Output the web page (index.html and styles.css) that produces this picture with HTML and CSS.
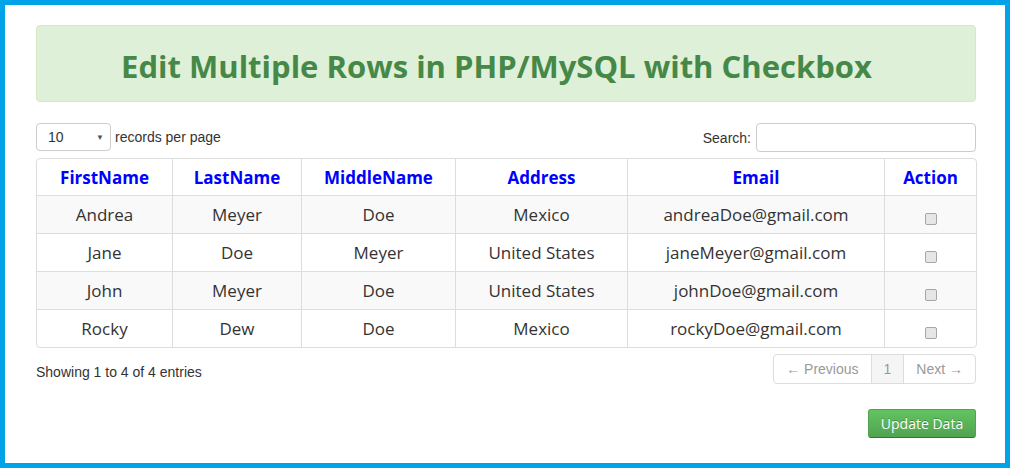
FILE: index.html
```html
<!DOCTYPE html>
<html>
<head>
<meta charset="utf-8">
<link rel="stylesheet" href="styles.css">
</head>
<body>
<div class="frame">
  <div class="container">
    <div class="title-box">
      <h1 class="title">Edit Multiple Rows in PHP/MySQL with Checkbox</h1>
    </div>
    <div class="controls">
      <div class="length">
        <div class="select"><span>10</span><span class="caret">&#9660;</span></div>
        <span class="label">records per page</span>
      </div>
      <div class="search">
        <span class="label">Search:</span>
        <div class="input"></div>
      </div>
    </div>
    <table class="grid">
      <colgroup>
        <col class="c1"><col class="c2"><col class="c3"><col class="c4"><col class="c5"><col class="c6">
      </colgroup>
      <thead>
        <tr><th>FirstName</th><th>LastName</th><th>MiddleName</th><th>Address</th><th>Email</th><th>Action</th></tr>
      </thead>
      <tbody>
        <tr class="odd"><td>Andrea</td><td>Meyer</td><td>Doe</td><td>Mexico</td><td>andreaDoe@gmail.com</td><td><span class="check"></span></td></tr>
        <tr><td>Jane</td><td>Doe</td><td>Meyer</td><td>United States</td><td>janeMeyer@gmail.com</td><td><span class="check"></span></td></tr>
        <tr class="odd"><td>John</td><td>Meyer</td><td>Doe</td><td>United States</td><td>johnDoe@gmail.com</td><td><span class="check"></span></td></tr>
        <tr><td>Rocky</td><td>Dew</td><td>Doe</td><td>Mexico</td><td>rockyDoe@gmail.com</td><td><span class="check"></span></td></tr>
      </tbody>
    </table>
    <div class="footer">
      <div class="info">Showing 1 to 4 of 4 entries</div>
      <ul class="pager">
        <li class="prev">&larr; Previous</li>
        <li class="active">1</li>
        <li class="next">Next &rarr;</li>
      </ul>
    </div>
    <div class="actions">
      <button class="btn-update">Update Data</button>
    </div>
  </div>
</div>
</body>
</html>
```

FILE: styles.css
```css
html, body {
  margin: 0;
  padding: 0;
  background: #fff;
}
.frame {
  box-sizing: border-box;
  height: 468px;
  border: 5px solid #00a3e8;
  background: #fff;
  font-family: "Liberation Sans", Arial, sans-serif;
  font-size: 14px;
  color: #333;
}
.container {
  width: 940px;
  margin-left: 31px;
  padding-top: 20px;
}
.title-box {
  box-sizing: border-box;
  height: 77px;
  background: #dff0d8;
  border: 1px solid #d6e9c6;
  border-radius: 4px;
  display: flex;
  align-items: center;
  justify-content: center;
  padding-right: 19px;
}
.title {
  margin: 0;
  font-family: "Comic Sans MS", "Open Sans", sans-serif;
  font-weight: 700;
  font-size: 31px;
  color: #468847;
  line-height: 1;
  padding-top: 5px;
}
.controls {
  display: flex;
  justify-content: space-between;
  align-items: flex-start;
  margin-top: 21px;
  height: 29px;
}
.length, .search {
  display: flex;
  align-items: center;
}
.select {
  box-sizing: border-box;
  width: 75px;
  height: 28px;
  border: 1px solid #ccc;
  border-radius: 4px;
  display: flex;
  align-items: center;
  justify-content: space-between;
  padding: 0 6px 0 11px;
  font-size: 14px;
  color: #333;
}
.caret {
  font-size: 8px;
  color: #555;
}
.length .label {
  margin-left: 4px;
}
.search .label {
  margin-right: 5px;
}
.input {
  box-sizing: border-box;
  width: 220px;
  height: 29px;
  border: 1px solid #ccc;
  border-radius: 4px;
}
.grid {
  margin-top: 6px;
  width: 940px;
  border-collapse: separate;
  border-spacing: 0;
  border: 1px solid #ddd;
  border-radius: 4px;
  table-layout: fixed;
  font-family: "Comic Sans MS", "Open Sans", sans-serif;
}
.c1 { width: 135px; }
.c2 { width: 129px; }
.c3 { width: 154px; }
.c4 { width: 172px; }
.c5 { width: 257px; }
.c6 { width: 92px; }
.grid th, .grid td {
  text-align: center;
  border-left: 1px solid #ddd;
  border-top: 1px solid #ddd;
  padding: 0;
}
.grid th:first-child, .grid td:first-child {
  border-left: none;
}
.grid thead th {
  border-top: none;
  height: 36px;
  color: #0000ff;
  font-weight: 700;
  font-size: 17px;
}
.grid td {
  height: 37px;
  font-size: 17px;
  color: #333;
}
.grid tr.odd td {
  background: #f9f9f9;
}
.grid tr:last-child td:first-child {
  border-bottom-left-radius: 4px;
}
.grid tr:last-child td:last-child {
  border-bottom-right-radius: 4px;
}
.check {
  display: inline-block;
  box-sizing: border-box;
  width: 12px;
  height: 12px;
  margin-top: 6px;
  border: 1px solid #a6a6a6;
  border-radius: 2px;
  background: #e6e6e6;
  vertical-align: middle;
}
.footer {
  display: flex;
  justify-content: space-between;
  align-items: center;
  margin-top: 6px;
}
.info {
  padding-top: 5px;
}
.pager {
  display: flex;
  margin: 0;
  padding: 0;
  list-style: none;
  border: 1px solid #ddd;
  border-radius: 4px;
  height: 28px;
}
.pager li {
  padding: 0 12px;
  line-height: 28px;
  color: #999;
  border-left: 1px solid #ddd;
}
.pager li:first-child {
  border-left: none;
}
.pager li.active {
  background: #f5f5f5;
}
.actions {
  display: flex;
  justify-content: flex-end;
  margin-top: 25px;
}
.btn-update {
  box-sizing: border-box;
  width: 108px;
  height: 29px;
  border: 1px solid #51a351;
  border-color: #51a351 #51a351 #387038;
  border-radius: 3px;
  background: linear-gradient(to bottom, #62c462, #51a351);
  color: #fff;
  font-family: "Comic Sans MS", "Open Sans", sans-serif;
  font-size: 14px;
  padding: 0;
  text-shadow: 0 -1px 0 rgba(0,0,0,0.25);
}
```
